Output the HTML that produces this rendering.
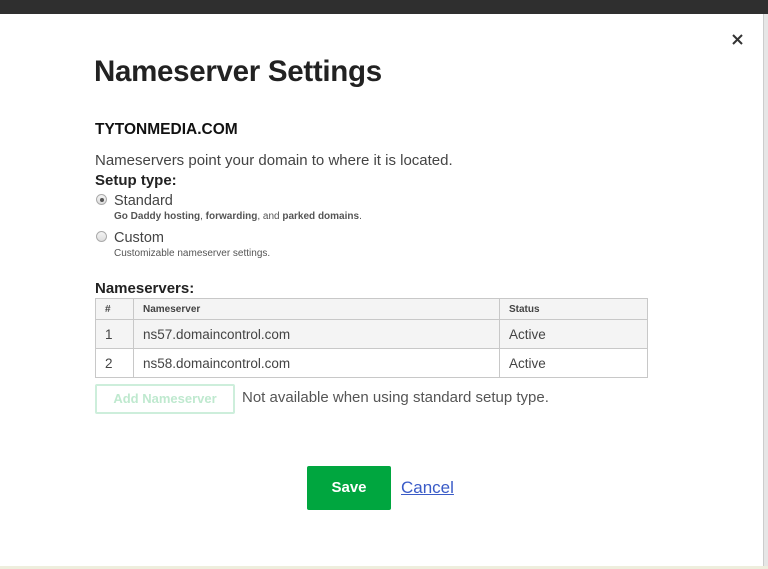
<!DOCTYPE html>
<html><head><meta charset="utf-8"><style>
*{margin:0;padding:0;box-sizing:border-box}
body{width:768px;height:569px;background:#fff;font-family:"Liberation Sans",Arial,sans-serif;position:relative;overflow:hidden;color:#333}
.topbar{position:absolute;left:0;top:0;width:768px;height:14px;background:#2f2f2f}
.rs{position:absolute;right:0;top:14px;width:5px;height:555px;background:#e6e6e6;border-left:1px solid #ccc}
.bot{position:absolute;left:0;bottom:0;width:768px;height:3px;background:#eeeedd}
.a{position:absolute;white-space:nowrap}
.radio{position:absolute;width:11px;height:11px;border-radius:50%;border:1px solid #aaa;background:linear-gradient(#f4f4f4,#ddd)}
.radio.on::after{content:"";position:absolute;left:2.5px;top:2.5px;width:4px;height:4px;border-radius:50%;background:#555}
table{position:absolute;left:95px;top:298px;width:553px;border-collapse:collapse}
td,th{border:1px solid #c8c8c8;text-align:left;padding-left:9px;color:#444}
th{font-size:10px;height:21px;font-weight:bold;background:#f4f4f4;color:#444}
td{font-size:13.5px;height:29px}
tr.r1 td{background:#f4f4f4}
</style></head><body>
<div class="topbar"></div><div class="rs"></div><div class="bot"></div>
<svg class="a" style="left:732px;top:34px" width="11" height="11" viewBox="0 0 11 11"><path d="M1 1L10 10M10 1L1 10" stroke="#333" stroke-width="2"/></svg>
<div class="a" style="left:94px;top:55px;font-size:29.5px;font-weight:bold;color:#222;letter-spacing:-0.3px">Nameserver Settings</div>
<div class="a" style="left:95px;top:121px;font-size:15.5px;font-weight:bold;color:#111">TYTONMEDIA.COM</div>
<div class="a" style="left:95px;top:152px;font-size:15px;color:#444">Nameservers point your domain to where it is located.</div>
<div class="a" style="left:95px;top:172px;font-size:15px;font-weight:bold;color:#222">Setup type:</div>
<div class="radio on" style="left:96px;top:194px"></div>
<div class="a" style="left:114px;top:193px;font-size:14.5px;color:#444">Standard</div>
<div class="a" style="left:114px;top:211px;font-size:10px;color:#555"><b>Go Daddy hosting</b>, <b>forwarding</b>, and <b>parked domains</b>.</div>
<div class="radio" style="left:96px;top:231px"></div>
<div class="a" style="left:114px;top:230px;font-size:14.5px;color:#444">Custom</div>
<div class="a" style="left:114px;top:248px;font-size:10px;color:#555">Customizable nameserver settings.</div>
<div class="a" style="left:95px;top:280px;font-size:15px;font-weight:bold;color:#222">Nameservers:</div>
<table>
<tr><th style="width:38px">#</th><th style="width:366px">Nameserver</th><th>Status</th></tr>
<tr class="r1"><td>1</td><td>ns57.domaincontrol.com</td><td>Active</td></tr>
<tr><td>2</td><td>ns58.domaincontrol.com</td><td>Active</td></tr>
</table>
<div class="a" style="left:95px;top:384px;width:140px;height:30px;border:2px solid #cdeedb;border-radius:2px;color:#bfe9cf;font-size:13px;font-weight:bold;text-align:center;line-height:26px">Add Nameserver</div>
<div class="a" style="left:242px;top:389px;font-size:15px;color:#555">Not available when using standard setup type.</div>
<div class="a" style="left:307px;top:466px;width:84px;height:44px;background:#00a63f;border-radius:2px;color:#fff;font-size:15px;font-weight:bold;text-align:center;line-height:44px">Save</div>
<div class="a" style="left:401px;top:478px;font-size:17px;color:#3a5bc7;text-decoration:underline">Cancel</div>
</body></html>
